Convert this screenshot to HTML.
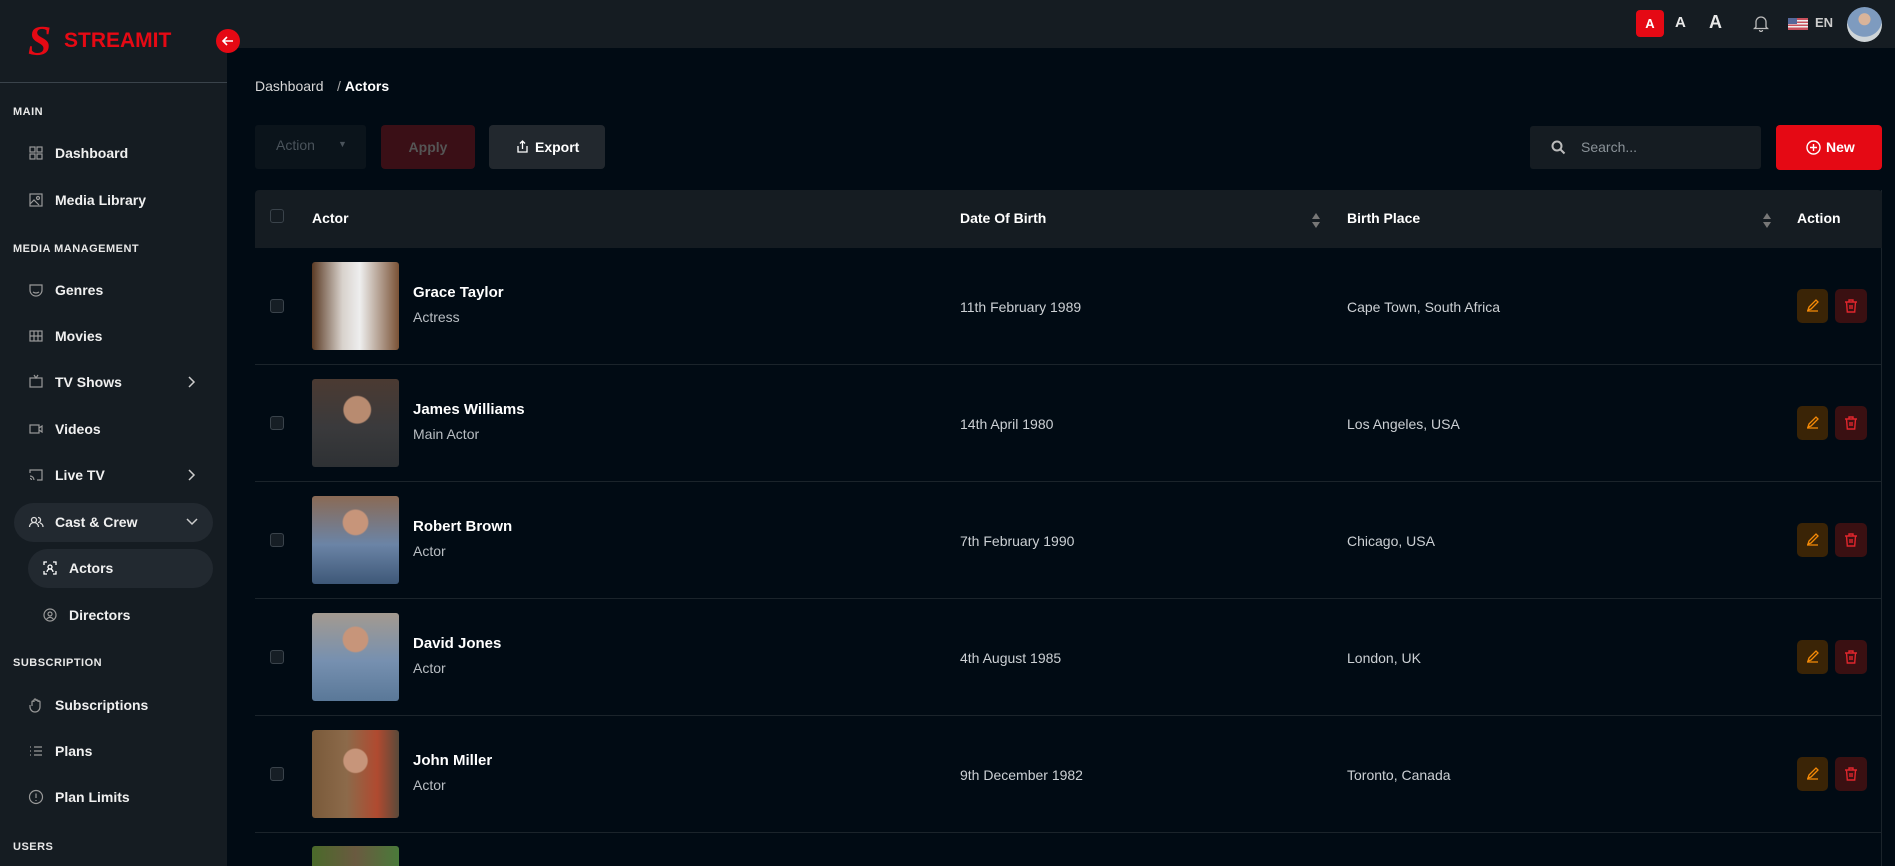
<!DOCTYPE html>
<html style="width:1895px;height:866px;overflow:hidden"><head><meta charset="utf-8"><style>
*{box-sizing:border-box;margin:0;padding:0}
body{width:1895px;height:866px;overflow:hidden;background:#010b14;font-family:"Liberation Sans",sans-serif;color:#fff;position:relative}
#wrap{position:absolute;left:0;top:0;width:1895px;height:866px;overflow:hidden}
.abs{position:absolute}
#side{left:0;top:0;width:227px;height:866px;background:#151c22}
#top{left:227px;top:0;width:1668px;height:48px;background:#151c22}
.sec{position:absolute;left:13px;font-size:11px;font-weight:bold;color:#e8e8e8;letter-spacing:.5px}
.it{position:absolute;left:0;width:227px;font-size:14px;font-weight:bold;color:#f0f0f0;height:20px;line-height:20px}
.it .ic{position:absolute;left:28px;top:2px;width:16px;height:16px}
.it span{position:absolute;left:55px}
.chev{position:absolute;left:185px;top:2px}
.th{position:absolute;top:210px;font-size:14px;font-weight:bold}
.row{position:absolute;left:255px;width:1627px;height:117px;border-bottom:1px solid #1b242b}
.cb{position:absolute;left:15px;top:51px;width:14px;height:14px;border:1px solid #3a434b;border-radius:3px;background:#161e25}
.ph{position:absolute;left:57px;top:14px;width:87px;height:88px;border-radius:3px}
.nm{position:absolute;left:158px;top:36px;font-size:15px;font-weight:bold}
.rl{position:absolute;left:158px;top:61px;font-size:14px;color:#b9bec3}
.dt{position:absolute;left:705px;top:51px;font-size:14px;color:#ccd0d4}
.bp{position:absolute;left:1092px;top:51px;font-size:14px;color:#ccd0d4}
.ed{position:absolute;left:1542px;top:41px;width:31px;height:34px;border-radius:5px;background:#3a2406}
.dl{position:absolute;left:1580px;top:41px;width:32px;height:34px;border-radius:5px;background:#3a1012}
.ed svg,.dl svg{position:absolute;left:8px;top:9px}
.sort{position:absolute;top:212px;width:10px}
</style></head><body><div id="wrap">
<div id="side" class="abs"></div>
<div id="top" class="abs"></div>
<div class="abs" style="left:0;top:82px;width:227px;height:1px;background:#3a434b"></div>
<div class="abs" style="left:28px;top:18px;font-size:42px;font-weight:bold;font-style:italic;color:#e50914;font-family:'Liberation Serif',serif">S</div>
<div class="abs" style="left:64px;top:29px;font-size:21px;font-weight:bold;color:#e50914">STREAMIT</div>
<div class="abs" style="left:216px;top:29px;width:24px;height:24px;border-radius:50%;background:#e50914"><svg width="24" height="24"><path d="M17 12H7M11 8l-4 4 4 4" stroke="#fff" stroke-width="1.6" fill="none"/></svg></div>
<div class="sec" style="top:106px">MAIN</div>
<div class="it" style="top:143px"><svg class="ic" viewBox="0 0 16 16" fill="none" stroke="#999" stroke-width="1.2"><rect x="2" y="2" width="5" height="5"/><rect x="9" y="2" width="5" height="5"/><rect x="2" y="9" width="5" height="5"/><rect x="9" y="9" width="5" height="5"/></svg><span>Dashboard</span></div>
<div class="it" style="top:190px"><svg class="ic" viewBox="0 0 16 16" fill="none" stroke="#999" stroke-width="1.2"><rect x="2" y="2" width="12" height="12"/><circle cx="10" cy="6" r="1.5"/><path d="M2 12l4-4 5 5"/></svg><span>Media Library</span></div>
<div class="sec" style="top:243px">MEDIA MANAGEMENT</div>
<div class="it" style="top:280px"><svg class="ic" viewBox="0 0 16 16" fill="none" stroke="#999" stroke-width="1.2"><path d="M2 3h12v5a6 6 0 0 1-12 0z"/><path d="M5 10q3 2 6 0"/></svg><span>Genres</span></div>
<div class="it" style="top:326px"><svg class="ic" viewBox="0 0 16 16" fill="none" stroke="#999" stroke-width="1.2"><rect x="2" y="3" width="12" height="10"/><path d="M6 3v10M10 3v10M2 8h12"/></svg><span>Movies</span></div>
<div class="it" style="top:372px"><svg class="ic" viewBox="0 0 16 16" fill="none" stroke="#999" stroke-width="1.2"><rect x="2" y="4" width="12" height="9"/><path d="M6 1l2 3 2-3"/></svg><span>TV Shows</span><svg class="chev" width="12" height="16"><path d="M4 3l5 5-5 5" stroke="#ccc" stroke-width="1.5" fill="none"/></svg></div>
<div class="it" style="top:419px"><svg class="ic" viewBox="0 0 16 16" fill="none" stroke="#999" stroke-width="1.2"><rect x="2" y="4" width="9" height="8"/><path d="M11 7l3-2v6l-3-2"/></svg><span>Videos</span></div>
<div class="it" style="top:465px"><svg class="ic" viewBox="0 0 16 16" fill="none" stroke="#999" stroke-width="1.2"><path d="M2 6V3h12v10H9"/><path d="M2 9a4 4 0 0 1 4 4M2 11.5a1.5 1.5 0 0 1 1.5 1.5"/></svg><span>Live TV</span><svg class="chev" width="12" height="16"><path d="M4 3l5 5-5 5" stroke="#ccc" stroke-width="1.5" fill="none"/></svg></div>
<div class="abs" style="left:14px;top:503px;width:199px;height:39px;border-radius:20px;background:#222930"></div>
<div class="it" style="top:512px"><svg class="ic" viewBox="0 0 16 16" fill="none" stroke="#ddd" stroke-width="1.3"><circle cx="6" cy="6" r="2.5"/><path d="M1.5 13a4.5 4.5 0 0 1 9 0M10 3.5a2.5 2.5 0 0 1 0 5M12 9a4 4 0 0 1 3 4"/></svg><span>Cast &amp; Crew</span><svg class="chev" width="14" height="16"><path d="M2 5l5 5 5-5" stroke="#ccc" stroke-width="1.5" fill="none"/></svg></div>
<div class="abs" style="left:28px;top:549px;width:185px;height:39px;border-radius:20px;background:#222930"></div>
<div class="it" style="top:558px"><svg class="ic" style="left:42px" viewBox="0 0 16 16" fill="none" stroke="#fff" stroke-width="1.3"><path d="M2 5V2h3M11 2h3v3M14 11v3h-3M5 14H2v-3"/><circle cx="8" cy="7" r="2"/><path d="M5 12a3 3 0 0 1 6 0"/></svg><span style="left:69px">Actors</span></div>
<div class="it" style="top:605px"><svg class="ic" style="left:42px" viewBox="0 0 16 16" fill="none" stroke="#999" stroke-width="1.2"><circle cx="8" cy="8" r="6"/><circle cx="8" cy="7" r="2"/><path d="M4.5 12.5a4 4 0 0 1 7 0"/></svg><span style="left:69px">Directors</span></div>
<div class="sec" style="top:657px">SUBSCRIPTION</div>
<div class="it" style="top:695px"><svg class="ic" viewBox="0 0 16 16" fill="none" stroke="#999" stroke-width="1.2"><path d="M4 9V5a1 1 0 0 1 2 0V3a1 1 0 0 1 2 0v1a1 1 0 0 1 2 0v1a1 1 0 0 1 2 0v5a5 5 0 0 1-10 0V8"/></svg><span>Subscriptions</span></div>
<div class="it" style="top:741px"><svg class="ic" viewBox="0 0 16 16" fill="none" stroke="#999" stroke-width="1.2"><path d="M2 4h1M2 8h1M2 12h1M6 4h8M6 8h8M6 12h8"/></svg><span>Plans</span></div>
<div class="it" style="top:787px"><svg class="ic" viewBox="0 0 16 16" fill="none" stroke="#999" stroke-width="1.2"><circle cx="8" cy="8" r="6.5"/><path d="M8 4.5v4.5M8 11v1"/></svg><span>Plan Limits</span></div>
<div class="sec" style="top:841px">USERS</div>
<div class="abs" style="left:1636px;top:10px;width:28px;height:27px;border-radius:4px;background:#e50914;font-size:13px;font-weight:bold;text-align:center;line-height:27px">A</div>
<div class="abs" style="left:1675px;top:14px;font-size:15px;font-weight:bold;color:#e8e8e8">A</div>
<div class="abs" style="left:1709px;top:12px;font-size:18px;font-weight:bold;color:#e8e8e8">A</div>
<svg class="abs" style="left:1753px;top:14px" width="16" height="18" viewBox="0 0 16 18" fill="none" stroke="#bbb" stroke-width="1.3"><path d="M3 13V8a5 5 0 0 1 10 0v5l1.5 1.5h-13z"/><path d="M6.5 16a1.5 1.5 0 0 0 3 0"/></svg>
<svg class="abs" style="left:1788px;top:18px" width="20" height="12"><rect width="20" height="12" fill="#c8515d"/><rect y="2" width="20" height="1.5" fill="#eee"/><rect y="5" width="20" height="1.5" fill="#eee"/><rect y="8" width="20" height="1.5" fill="#eee"/><rect width="9" height="6" fill="#56689a"/></svg>
<div class="abs" style="left:1815px;top:15px;font-size:13px;font-weight:bold;color:#ccc">EN</div>
<div class="abs" style="left:1847px;top:7px;width:35px;height:35px;border-radius:50%;background:radial-gradient(circle at 50% 35%,#d9b49a 0 20%,#7e9bbf 22% 60%,#cfd5d8 62%)"></div>
<div class="abs" style="left:255px;top:78px;font-size:14px;color:#d8d8d8">Dashboard</div>
<div class="abs" style="left:337px;top:78px;font-size:14px;color:#aaa">/ <b style="color:#fff">Actors</b></div>
<div class="abs" style="left:255px;top:125px;width:111px;height:44px;border-radius:3px;background:#0b141b;color:#4a535b;font-size:14px;padding:12px 0 0 21px">Action<span style="position:absolute;left:83px;top:14px;font-size:9px">▼</span></div>
<div class="abs" style="left:381px;top:125px;width:94px;height:44px;border-radius:4px;background:#3a0f16;color:#555;font-size:14px;font-weight:bold;text-align:center;line-height:44px">Apply</div>
<div class="abs" style="left:489px;top:125px;width:116px;height:44px;border-radius:4px;background:#22282e;font-size:14px;font-weight:bold;line-height:44px;padding-left:46px">Export<svg style="position:absolute;left:27px;top:15px" width="13" height="13" fill="none" stroke="#fff" stroke-width="1.3"><path d="M2 6v6h9V6M6.5 9V1M4 3.5l2.5-2.5 2.5 2.5"/></svg></div>
<div class="abs" style="left:1530px;top:126px;width:231px;height:43px;border-radius:3px;background:#151c22;font-size:14px;color:#8a9298;line-height:43px;padding-left:51px">Search...<svg style="position:absolute;left:21px;top:14px" width="15" height="15" fill="none" stroke="#bbb" stroke-width="2"><circle cx="6" cy="6" r="4.5"/><path d="M9.5 9.5l4 4"/></svg></div>
<div class="abs" style="left:1776px;top:125px;width:106px;height:45px;border-radius:4px;background:#e50914;font-size:14px;font-weight:bold;line-height:45px;padding-left:50px">New<svg style="position:absolute;left:30px;top:15px" width="15" height="15" fill="none" stroke="#fff" stroke-width="1.4"><circle cx="7.5" cy="7.5" r="6.5"/><path d="M7.5 4v7M4 7.5h7"/></svg></div>
<div class="abs" style="left:255px;top:190px;width:1627px;height:676px;background:#010b14;border-right:1px solid #1b242b"></div>
<div class="abs" style="left:255px;top:190px;width:1627px;height:58px;background:#151c22;border-radius:4px 4px 0 0"></div>
<div class="abs" style="left:270px;top:209px;width:14px;height:14px;border:1px solid #3a434b;border-radius:3px"></div>
<div class="th" style="left:312px">Actor</div>
<div class="th" style="left:960px">Date Of Birth</div>
<div class="th" style="left:1347px">Birth Place</div>
<div class="th" style="left:1797px">Action</div>
<svg class="sort" style="left:1311px" width="10" height="18"><path d="M1 7l4-6 4 6zM1 10l4 6 4-6z" fill="#777"/></svg>
<svg class="sort" style="left:1762px" width="10" height="18"><path d="M1 7l4-6 4 6zM1 10l4 6 4-6z" fill="#777"/></svg>

<div class="row" style="top:248px"><div class="cb"></div><div class="ph" style="background:linear-gradient(90deg,#5a3a24,#d8d2cc 35%,#eee 55%,#7a5236)"></div><div class="nm">Grace Taylor</div><div class="rl">Actress</div><div class="dt">11th February 1989</div><div class="bp">Cape Town, South Africa</div>
<div class="ed"><svg width="15" height="15" fill="none" stroke="#f58a07" stroke-width="1.3"><path d="M2 13h11M3 12l1-3 7-7 2 2-7 7z"/></svg></div><div class="dl"><svg width="16" height="16" fill="none" stroke="#e0262c" stroke-width="1.4"><path d="M2 4h12M6 4V2h4v2M3.5 4l.8 10h7.4l.8-10M7 7v4M9 7v4"/></svg></div></div>
<div class="row" style="top:365px"><div class="cb"></div><div class="ph" style="background:radial-gradient(circle at 52% 35%,#b88b70 0 18%,transparent 20%),linear-gradient(180deg,#4b3a32,#3a3a3c 55%,#2e3134)"></div><div class="nm">James Williams</div><div class="rl">Main Actor</div><div class="dt">14th April 1980</div><div class="bp">Los Angeles, USA</div>
<div class="ed"><svg width="15" height="15" fill="none" stroke="#f58a07" stroke-width="1.3"><path d="M2 13h11M3 12l1-3 7-7 2 2-7 7z"/></svg></div><div class="dl"><svg width="16" height="16" fill="none" stroke="#e0262c" stroke-width="1.4"><path d="M2 4h12M6 4V2h4v2M3.5 4l.8 10h7.4l.8-10M7 7v4M9 7v4"/></svg></div></div>
<div class="row" style="top:482px"><div class="cb"></div><div class="ph" style="background:radial-gradient(circle at 50% 30%,#c7957a 0 16%,transparent 18%),linear-gradient(180deg,#8a6a55,#6b84a6 55%,#3e5878)"></div><div class="nm">Robert Brown</div><div class="rl">Actor</div><div class="dt">7th February 1990</div><div class="bp">Chicago, USA</div>
<div class="ed"><svg width="15" height="15" fill="none" stroke="#f58a07" stroke-width="1.3"><path d="M2 13h11M3 12l1-3 7-7 2 2-7 7z"/></svg></div><div class="dl"><svg width="16" height="16" fill="none" stroke="#e0262c" stroke-width="1.4"><path d="M2 4h12M6 4V2h4v2M3.5 4l.8 10h7.4l.8-10M7 7v4M9 7v4"/></svg></div></div>
<div class="row" style="top:599px"><div class="cb"></div><div class="ph" style="background:radial-gradient(circle at 50% 30%,#c7957a 0 16%,transparent 18%),linear-gradient(180deg,#a39a90,#7690b0 55%,#5a7898)"></div><div class="nm">David Jones</div><div class="rl">Actor</div><div class="dt">4th August 1985</div><div class="bp">London, UK</div>
<div class="ed"><svg width="15" height="15" fill="none" stroke="#f58a07" stroke-width="1.3"><path d="M2 13h11M3 12l1-3 7-7 2 2-7 7z"/></svg></div><div class="dl"><svg width="16" height="16" fill="none" stroke="#e0262c" stroke-width="1.4"><path d="M2 4h12M6 4V2h4v2M3.5 4l.8 10h7.4l.8-10M7 7v4M9 7v4"/></svg></div></div>
<div class="row" style="top:716px"><div class="cb"></div><div class="ph" style="background:radial-gradient(circle at 50% 35%,#c7957a 0 16%,transparent 18%),linear-gradient(90deg,#7a5a3a,#8c6a4a 40%,#b04a30 75%,#5a4a3a)"></div><div class="nm">John Miller</div><div class="rl">Actor</div><div class="dt">9th December 1982</div><div class="bp">Toronto, Canada</div>
<div class="ed"><svg width="15" height="15" fill="none" stroke="#f58a07" stroke-width="1.3"><path d="M2 13h11M3 12l1-3 7-7 2 2-7 7z"/></svg></div><div class="dl"><svg width="16" height="16" fill="none" stroke="#e0262c" stroke-width="1.4"><path d="M2 4h12M6 4V2h4v2M3.5 4l.8 10h7.4l.8-10M7 7v4M9 7v4"/></svg></div></div>
<div class="abs" style="left:312px;top:846px;width:87px;height:20px;border-radius:3px 3px 0 0;background:linear-gradient(90deg,#4a6a2a,#6a5a40,#4a7a3a)"></div>
</div></body></html>
